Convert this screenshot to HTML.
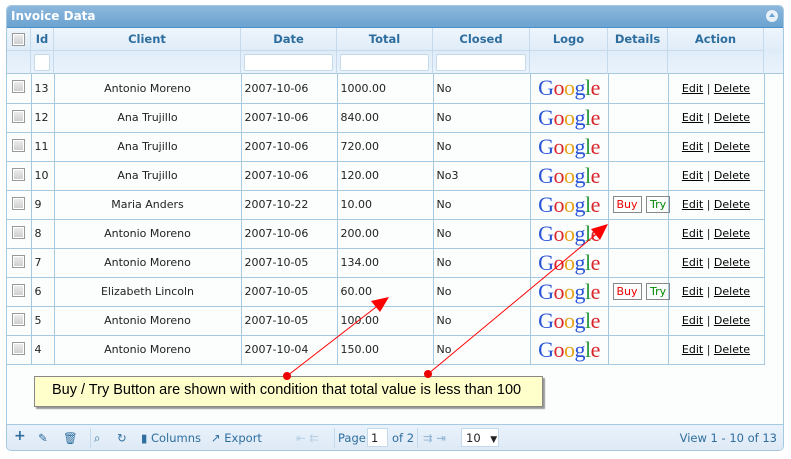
<!DOCTYPE html>
<html><head><meta charset="utf-8"><style>
*{box-sizing:border-box;margin:0;padding:0}
body{width:791px;height:459px;background:#fff;font-family:"DejaVu Sans","Liberation Sans",sans-serif;font-size:11px;color:#222;position:relative;overflow:hidden}
.panel{position:absolute;left:6px;top:5px;width:778px;height:446px;border:1px solid #a6c9e2;border-radius:5px;background:#fcfdfd;overflow:hidden}
.title{position:absolute;left:0;top:0;width:100%;height:22px;background:linear-gradient(#8db8dc,#6aa3d1);color:#fff;font-weight:bold;font-size:12px;padding:3px 0 0 4px;border-bottom:1px solid #4f8fc7}
.title .c{position:absolute;right:5px;top:4px;width:12px;height:12px;border-radius:6px;background:#e8f1f8}
.title .c:after{content:"";position:absolute;left:3px;top:3px;border:3px solid transparent;border-bottom:4px solid #6aa3d1;border-top:0}
.hdr{position:absolute;left:0;top:22px;width:100%;height:46px;background:linear-gradient(#eef5fc,#dfecf8 50%,#eaf3fc);border-bottom:1px solid #a6c9e2}
.h{position:absolute;top:0;height:46px;border-right:1px solid #c5dbec}
.h span{display:block;height:23px;line-height:23px;text-align:center;font-weight:bold;color:#2e6e9e;font-size:11.5px;border-bottom:1px solid #c5dbec}
.h i{position:absolute;left:3px;right:3px;top:26px;height:17px;background:#fff;border:1px solid #c5dbec;border-radius:2px}
.cb{display:inline-block;width:13px;height:13px;border:1px solid #999;background:linear-gradient(#eee,#ccc);box-shadow:inset 0 0 0 1px #fff}
table{position:absolute;left:0;top:68px;border-collapse:collapse;table-layout:fixed;width:757px}
td{height:29px;border:1px solid #a6c9e2;border-top:0;padding:0 3px;white-space:nowrap;font-size:11px}
td:first-child{border-left:0;text-align:center}
.g{font-family:"Liberation Serif",serif;font-size:22px;letter-spacing:-0.5px;text-align:center;line-height:26px;padding:0}
.g b{font-weight:normal;color:#2a55d6}.g .r{color:#d9262a}.g .y{color:#e6a21a}.g .n{color:#2a9a3a}
.btn{display:inline-block;border:1px solid #888;padding:1px 3px;font-size:11px;margin-left:1px}
.act a{color:#000;text-decoration:underline}
.foot{position:absolute;left:0;bottom:0;width:100%;height:26px;background:linear-gradient(#eaf3fc,#dde9f5);border-top:1px solid #a6c9e2;color:#2e6e9e;font-size:11.5px}
.foot span{position:absolute;top:6px}
.note{position:absolute;left:34px;top:376px;width:509px;height:31px;background:#ffffcc;border:1px solid #888;box-shadow:2px 2px 1px #999;font-family:"Liberation Sans",sans-serif;font-size:14.5px;color:#000;padding:5px 0 0 17px}
</style></head><body>
<div class="panel">
<div class="title">Invoice Data<div class="c"></div></div>
<div class="hdr">
<div class="h" style="left:0;width:24px"><span><em class="cb" style="margin-top:5px"></em></span></div>
<div class="h" style="left:24px;width:23px"><span>Id</span><i></i></div>
<div class="h" style="left:47px;width:187px"><span>Client</span></div>
<div class="h" style="left:234px;width:96px"><span>Date</span><i></i></div>
<div class="h" style="left:330px;width:96px"><span>Total</span><i></i></div>
<div class="h" style="left:426px;width:97px"><span>Closed</span><i></i></div>
<div class="h" style="left:523px;width:78px"><span>Logo</span></div>
<div class="h" style="left:601px;width:60px"><span>Details</span></div>
<div class="h" style="left:661px;width:96px"><span>Action</span></div>
</div>
<table>
<colgroup><col style="width:24px"><col style="width:23px"><col style="width:187px"><col style="width:96px"><col style="width:96px"><col style="width:97px"><col style="width:78px"><col style="width:60px"><col style="width:96px"></colgroup>
<tr><td><em class="cb"></em></td><td>13</td><td style="text-align:center">Antonio Moreno</td><td>2007-10-06</td><td>1000.00</td><td>No</td><td class="g"><b>G</b><b class="r">o</b><b class="y">o</b><b>g</b><b class="n">l</b><b class="r">e</b></td><td></td><td class="act" style="text-align:center"><a>Edit</a> | <a>Delete</a></td></tr>
<tr><td><em class="cb"></em></td><td>12</td><td style="text-align:center">Ana Trujillo</td><td>2007-10-06</td><td>840.00</td><td>No</td><td class="g"><b>G</b><b class="r">o</b><b class="y">o</b><b>g</b><b class="n">l</b><b class="r">e</b></td><td></td><td class="act" style="text-align:center"><a>Edit</a> | <a>Delete</a></td></tr>
<tr><td><em class="cb"></em></td><td>11</td><td style="text-align:center">Ana Trujillo</td><td>2007-10-06</td><td>720.00</td><td>No</td><td class="g"><b>G</b><b class="r">o</b><b class="y">o</b><b>g</b><b class="n">l</b><b class="r">e</b></td><td></td><td class="act" style="text-align:center"><a>Edit</a> | <a>Delete</a></td></tr>
<tr><td><em class="cb"></em></td><td>10</td><td style="text-align:center">Ana Trujillo</td><td>2007-10-06</td><td>120.00</td><td>No3</td><td class="g"><b>G</b><b class="r">o</b><b class="y">o</b><b>g</b><b class="n">l</b><b class="r">e</b></td><td></td><td class="act" style="text-align:center"><a>Edit</a> | <a>Delete</a></td></tr>
<tr><td><em class="cb"></em></td><td>9</td><td style="text-align:center">Maria Anders</td><td>2007-10-22</td><td>10.00</td><td>No</td><td class="g"><b>G</b><b class="r">o</b><b class="y">o</b><b>g</b><b class="n">l</b><b class="r">e</b></td><td><span class="btn" style="color:#e00">Buy</span> <span class="btn" style="color:#080">Try</span></td><td class="act" style="text-align:center"><a>Edit</a> | <a>Delete</a></td></tr>
<tr><td><em class="cb"></em></td><td>8</td><td style="text-align:center">Antonio Moreno</td><td>2007-10-06</td><td>200.00</td><td>No</td><td class="g"><b>G</b><b class="r">o</b><b class="y">o</b><b>g</b><b class="n">l</b><b class="r">e</b></td><td></td><td class="act" style="text-align:center"><a>Edit</a> | <a>Delete</a></td></tr>
<tr><td><em class="cb"></em></td><td>7</td><td style="text-align:center">Antonio Moreno</td><td>2007-10-05</td><td>134.00</td><td>No</td><td class="g"><b>G</b><b class="r">o</b><b class="y">o</b><b>g</b><b class="n">l</b><b class="r">e</b></td><td></td><td class="act" style="text-align:center"><a>Edit</a> | <a>Delete</a></td></tr>
<tr><td><em class="cb"></em></td><td>6</td><td style="text-align:center">Elizabeth Lincoln</td><td>2007-10-05</td><td>60.00</td><td>No</td><td class="g"><b>G</b><b class="r">o</b><b class="y">o</b><b>g</b><b class="n">l</b><b class="r">e</b></td><td><span class="btn" style="color:#e00">Buy</span> <span class="btn" style="color:#080">Try</span></td><td class="act" style="text-align:center"><a>Edit</a> | <a>Delete</a></td></tr>
<tr><td><em class="cb"></em></td><td>5</td><td style="text-align:center">Antonio Moreno</td><td>2007-10-05</td><td>100.00</td><td>No</td><td class="g"><b>G</b><b class="r">o</b><b class="y">o</b><b>g</b><b class="n">l</b><b class="r">e</b></td><td></td><td class="act" style="text-align:center"><a>Edit</a> | <a>Delete</a></td></tr>
<tr><td><em class="cb"></em></td><td>4</td><td style="text-align:center">Antonio Moreno</td><td>2007-10-04</td><td>150.00</td><td>No</td><td class="g"><b>G</b><b class="r">o</b><b class="y">o</b><b>g</b><b class="n">l</b><b class="r">e</b></td><td></td><td class="act" style="text-align:center"><a>Edit</a> | <a>Delete</a></td></tr>
</table>
<div class="foot">
<span style="left:7px;font-weight:bold;font-size:14px;top:3px">+</span>
<span style="left:31px">✎</span><span style="left:56px">🗑</span>
<span style="left:83px;width:1px;height:20px;top:3px;background:#c5dbec"></span>
<span style="left:87px">⌕</span><span style="left:110px">↻</span>
<span style="left:134px">▮ Columns</span><span style="left:204px">↗ Export</span>
<span style="left:289px;color:#b8cfe3">⇤ ⇇</span>
<span style="left:327px;width:1px;height:20px;top:3px;background:#c5dbec"></span>
<span style="left:331px">Page</span>
<span style="left:360px;top:3px;width:21px;height:19px;background:#fff;border:1px solid #c5dbec;color:#222;padding:2px 0 0 3px">1</span>
<span style="left:385px">of 2</span>
<span style="left:410px;width:1px;height:20px;top:3px;background:#c5dbec"></span>
<span style="left:416px;color:#8fb4d6">⇉ ⇥</span>
<span style="left:454px;top:3px;width:38px;height:19px;background:#fff;border:1px solid #c5dbec;color:#222;padding:2px 0 0 4px">10 <b style="font-size:9px;margin-left:6px">▼</b></span>
<span style="right:6px">View 1 - 10 of 13</span>
</div>
</div>
<div class="note">Buy / Try Button are shown with condition that total value is less than 100</div>
<svg style="position:absolute;left:0;top:0" width="791" height="459">
<line x1="287" y1="376" x2="380" y2="304" stroke="#f00" stroke-width="1"/>
<polygon points="389,297 371,301 380,312" fill="#f00"/>
<circle cx="287" cy="376" r="4" fill="#e00"/>
<line x1="428" y1="374" x2="600" y2="231" stroke="#f00" stroke-width="1"/>
<polygon points="608,224 591,229 600,240" fill="#f00"/>
<circle cx="428" cy="374" r="4" fill="#e00"/>
</svg>
</body></html>
